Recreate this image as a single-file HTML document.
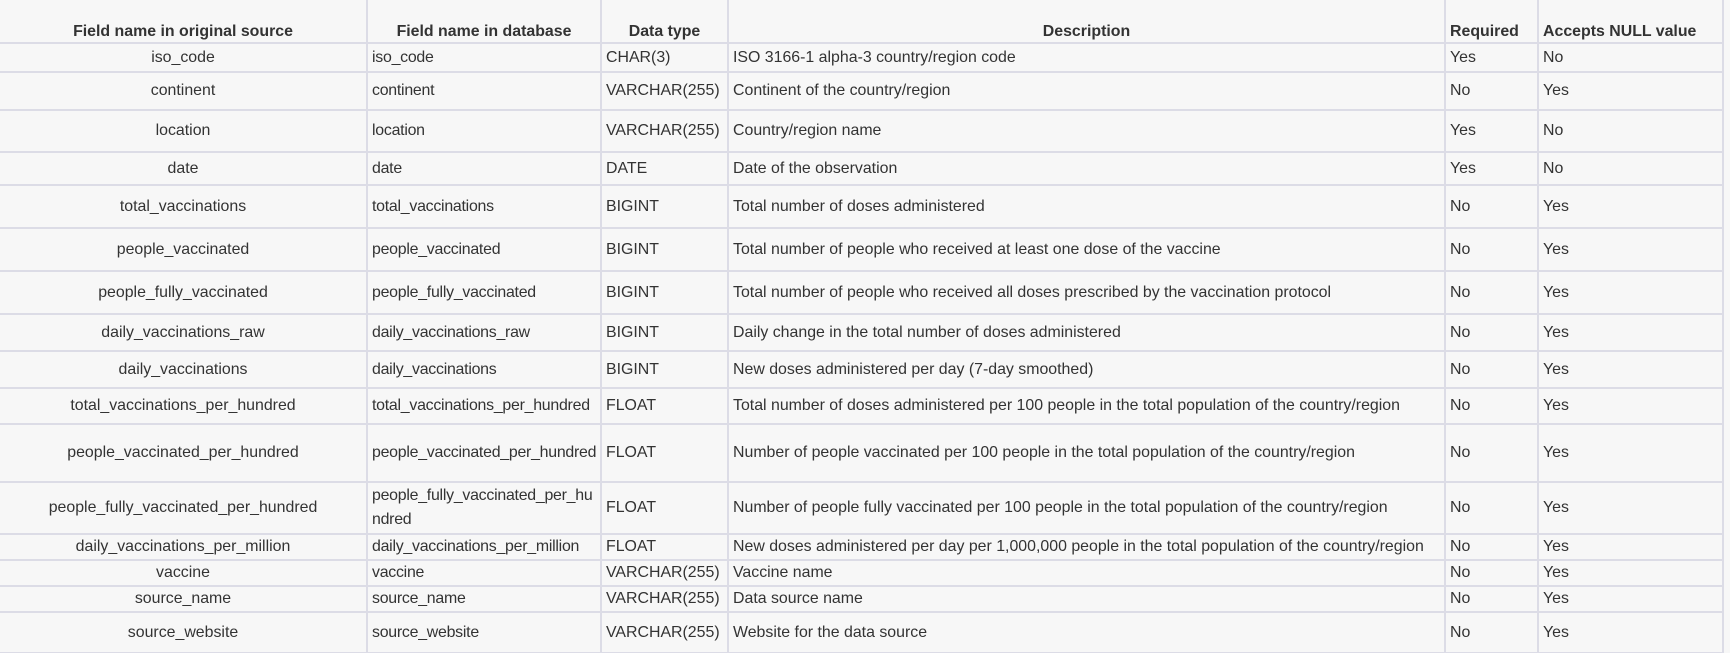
<!DOCTYPE html>
<html><head><meta charset="utf-8"><style>
html,body{margin:0;padding:0;background:#f7f7f7;width:1730px;height:653px;overflow:hidden}
table{border-collapse:collapse;table-layout:fixed;width:1723px;font-family:"Liberation Sans",sans-serif;font-size:15.9px;color:#333;letter-spacing:0}
td,th{border:2px solid #dcdce6;padding:0 4px;vertical-align:middle;text-align:left;white-space:nowrap;overflow:hidden;line-height:24px}
td:nth-child(2){letter-spacing:-0.25px}
tr>*:first-child{border-left:none;text-align:center}
th{font-weight:bold;vertical-align:bottom;padding-bottom:0;line-height:20px;border-top:none;text-align:center}
th:nth-child(5),th:nth-child(6){text-align:left}
</style></head><body>
<table>
<colgroup><col style="width:367px"><col style="width:234px"><col style="width:127px"><col style="width:717px"><col style="width:93px"><col style="width:185px"></colgroup>
<tr style="height:43px"><th>Field name in original source</th><th>Field name in database</th><th>Data type</th><th>Description</th><th>Required</th><th>Accepts NULL value</th></tr>
<tr style="height:29px"><td>iso_code</td><td>iso_code</td><td>CHAR(3)</td><td>ISO 3166-1 alpha-3 country/region code</td><td>Yes</td><td>No</td></tr>
<tr style="height:38px"><td>continent</td><td>continent</td><td>VARCHAR(255)</td><td>Continent of the country/region</td><td>No</td><td>Yes</td></tr>
<tr style="height:42px"><td>location</td><td>location</td><td>VARCHAR(255)</td><td>Country/region name</td><td>Yes</td><td>No</td></tr>
<tr style="height:33px"><td>date</td><td>date</td><td>DATE</td><td>Date of the observation</td><td>Yes</td><td>No</td></tr>
<tr style="height:43px"><td>total_vaccinations</td><td>total_vaccinations</td><td>BIGINT</td><td>Total number of doses administered</td><td>No</td><td>Yes</td></tr>
<tr style="height:43px"><td>people_vaccinated</td><td>people_vaccinated</td><td>BIGINT</td><td>Total number of people who received at least one dose of the vaccine</td><td>No</td><td>Yes</td></tr>
<tr style="height:43px"><td>people_fully_vaccinated</td><td>people_fully_vaccinated</td><td>BIGINT</td><td>Total number of people who received all doses prescribed by the vaccination protocol</td><td>No</td><td>Yes</td></tr>
<tr style="height:37px"><td>daily_vaccinations_raw</td><td>daily_vaccinations_raw</td><td>BIGINT</td><td>Daily change in the total number of doses administered</td><td>No</td><td>Yes</td></tr>
<tr style="height:37px"><td>daily_vaccinations</td><td>daily_vaccinations</td><td>BIGINT</td><td>New doses administered per day (7-day smoothed)</td><td>No</td><td>Yes</td></tr>
<tr style="height:36px"><td>total_vaccinations_per_hundred</td><td>total_vaccinations_per_hundred</td><td>FLOAT</td><td>Total number of doses administered per 100 people in the total population of the country/region</td><td>No</td><td>Yes</td></tr>
<tr style="height:58px"><td>people_vaccinated_per_hundred</td><td>people_vaccinated_per_hundred</td><td>FLOAT</td><td>Number of people vaccinated per 100 people in the total population of the country/region</td><td>No</td><td>Yes</td></tr>
<tr style="height:52px"><td>people_fully_vaccinated_per_hundred</td><td>people_fully_vaccinated_per_hu<br>ndred</td><td>FLOAT</td><td>Number of people fully vaccinated per 100 people in the total population of the country/region</td><td>No</td><td>Yes</td></tr>
<tr style="height:25px"><td>daily_vaccinations_per_million</td><td>daily_vaccinations_per_million</td><td>FLOAT</td><td>New doses administered per day per 1,000,000 people in the total population of the country/region</td><td>No</td><td>Yes</td></tr>
<tr style="height:26px"><td>vaccine</td><td>vaccine</td><td>VARCHAR(255)</td><td>Vaccine name</td><td>No</td><td>Yes</td></tr>
<tr style="height:25px"><td>source_name</td><td>source_name</td><td>VARCHAR(255)</td><td>Data source name</td><td>No</td><td>Yes</td></tr>
<tr style="height:41px"><td>source_website</td><td>source_website</td><td>VARCHAR(255)</td><td>Website for the data source</td><td>No</td><td>Yes</td></tr>
<tr style="height:20px"><td></td><td></td><td></td><td></td><td></td><td></td></tr>
</table>
</body></html>
